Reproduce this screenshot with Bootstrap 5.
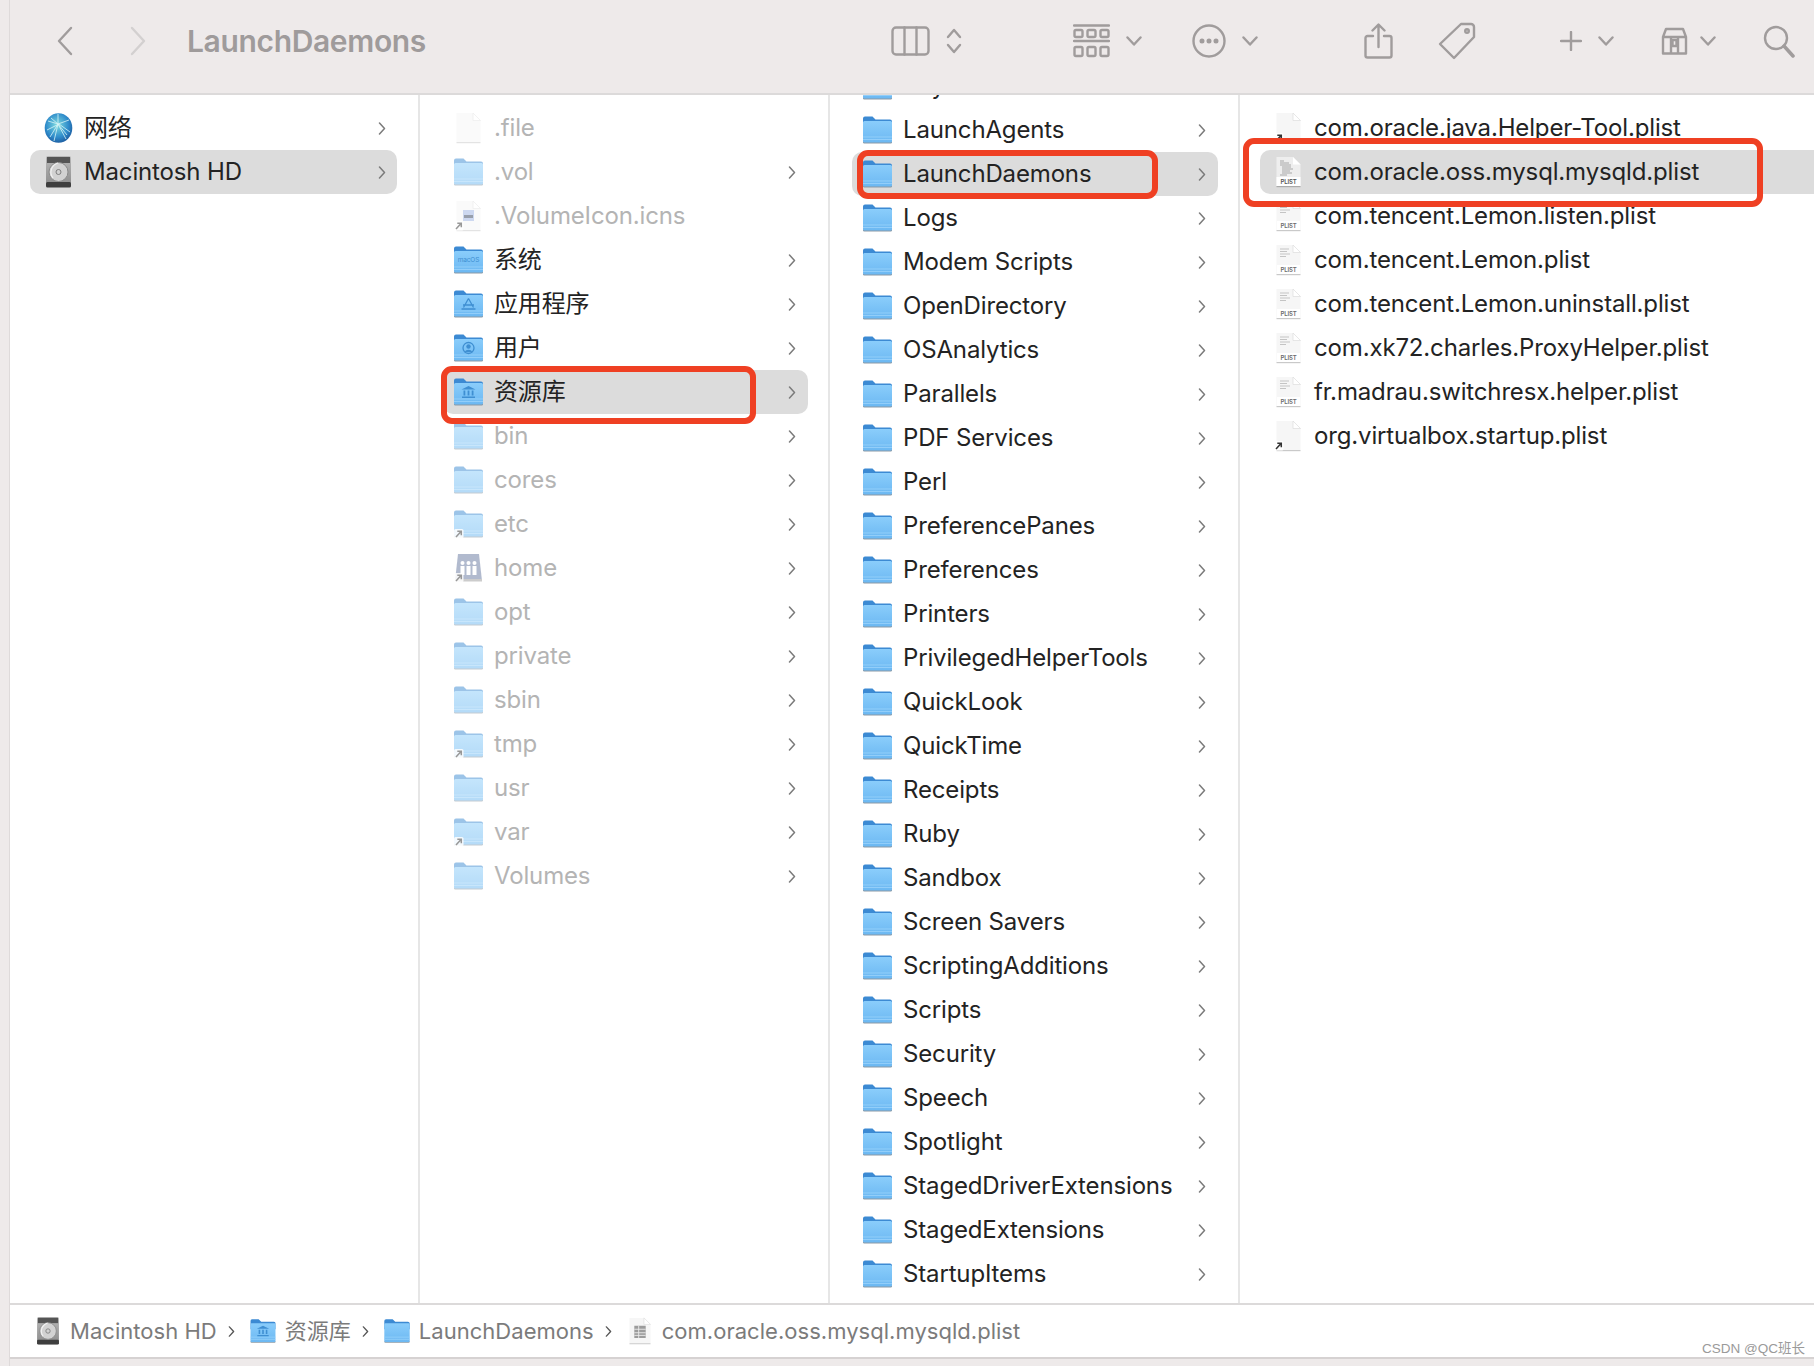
<!DOCTYPE html>
<html lang="zh"><head><meta charset="utf-8"><title>LaunchDaemons</title>
<link href="https://cdn.jsdelivr.net/npm/bootstrap@5.3.0/dist/css/bootstrap.min.css" rel="stylesheet">
<style>
html,body{height:100%;overflow:hidden}
body{background:#eeeaea;font-family:Inter,"Noto Sans CJK SC",sans-serif;color:#232323}
.fd-win{height:1366px;width:1814px;padding-left:9px;position:relative;overflow:hidden}
.fd-inner{height:100%;border-left:1px solid #dedada}
.fd-tool{height:95px;padding-bottom:11px;background:#eeeaea;border-bottom:2px solid #dcdada;padding-right:19px;flex:none}
.fd-title{font-size:30px;font-weight:600;color:#9f9b9b;margin-left:41px;letter-spacing:-.35px;line-height:1}
.fd-back{margin-left:46px}
.fd-fwd{margin-left:56px}
.fd-t{stroke:#a09c9c;fill:none;stroke-width:2.4;stroke-linecap:round;stroke-linejoin:round;display:block}
.g111{margin-left:111px}.g50{margin-left:50px}.g106{margin-left:106px}.g45{margin-left:45px}.g84{margin-left:84px}.g47{margin-left:47px}.g12{margin-left:12px}
.fd-cols{flex:1 1 0;min-height:0;background:#fff}
.fd-col{width:410px;flex:none;overflow:hidden;border-right:2px solid #e6e6e6;padding-top:11px}
.fd-col.side{width:410px;padding-right:21px;padding-left:20px}
.fd-col.c2{padding-left:23px;padding-right:20px}
.fd-col.c3{width:410px;padding-left:22px;padding-right:20px;padding-top:0}
.fd-scrolled{margin-top:-31px}
.fd-col.c4{flex:1 1 0;border-right:0;padding-left:20px}
.fd-row{height:44px;padding-left:11px;padding-right:12px;font-size:24px;letter-spacing:-.15px;white-space:nowrap;border-radius:10px}
.side .fd-row{padding-left:14px;padding-right:11px}
.c4 .fd-row{padding-left:14px;border-radius:10px 0 0 10px}
.fd-sel{background:#dcdcdc}
.fd-ic{width:29px;height:32px;flex:none;margin-right:11px;display:block}
.fd-name{flex:1 1 auto;min-width:0}
.fd-chev{width:8px;height:13px;flex:none;stroke:#7b7b7b;stroke-width:1.5;fill:none;stroke-linecap:round;stroke-linejoin:round}
.fd-dim .fd-name{color:#b4b4b4}
.fd-dim .fd-ic{opacity:.5}
.fd-status{height:56px;background:#fff;border-top:2px solid #dcdada;border-bottom:2px solid #d6d2d2;padding-left:25px;font-size:22px;color:#7b7b7b;letter-spacing:.03px;flex:none;white-space:nowrap}
.fd-status svg.s-ic{width:26px;height:28px;flex:none;margin-right:9px;display:block}
.fd-sep{width:7px;height:11px;flex:none;margin:0 15px 0 11px;stroke:#555;stroke-width:1.6;fill:none;stroke-linecap:round;stroke-linejoin:round}
.fd-end{flex:none;height:7px}
.fd-red{position:absolute;border:6px solid #ef4023;border-radius:11px;pointer-events:none}
.r1{left:441px;top:366px;width:315px;height:58px}
.r2{left:857px;top:150px;width:301px;height:49px}
.r3{left:1243px;top:138px;width:520px;height:69px}
.fd-mark{position:absolute;left:1702px;top:1341px;font-size:13.5px;color:#9a9a9a;font-family:"Liberation Sans","Noto Sans CJK SC",sans-serif;line-height:16px}
</style></head>
<body>
<svg width="0" height="0" class="position-absolute" aria-hidden="true">
<defs>
<linearGradient id="fg" x1="0" y1="0" x2="0" y2="1"><stop offset="0" stop-color="#8acdfb"/><stop offset="1" stop-color="#6cb8f2"/></linearGradient>
<radialGradient id="gb" cx=".45" cy=".4" r=".75"><stop offset="0" stop-color="#7fdde0"/><stop offset=".55" stop-color="#2f8ccb"/><stop offset="1" stop-color="#123f86"/></radialGradient>
<linearGradient id="hdg" x1="0" y1="0" x2="0" y2="1"><stop offset="0" stop-color="#b9b9b9"/><stop offset="1" stop-color="#8a8a8a"/></linearGradient>
<symbol id="folder" viewBox="0 0 29 32">
<path d="M0 4.500a2 2 0 0 1 2-2h7.500l3 3H27a2 2 0 0 1 2 2V14H0z" fill="#3c8ad3"/>
<rect x="0" y="27" width="29" height="2.500" rx="1.200" fill="#8b9aa6"/>
<path d="M0 8.500a1.500 1.500 0 0 1 1.500-1.500H27.500A1.500 1.500 0 0 1 29 8.500V27a1.500 1.500 0 0 1-1.500 1.500H1.500A1.500 1.500 0 0 1 0 27z" fill="url(#fg)"/>
<path d="M0 23h29M0 25.500h29" stroke="#9bd3fb" stroke-width=".8"/>
</symbol>
<symbol id="alias" viewBox="0 0 29 32">
<rect x="0" y="21" width="9.500" height="9.500" rx="1.500" fill="#fff" fill-opacity=".85"/>
<path d="M2 29l5-5.500M3.300 23.300h4v4" stroke="#333" stroke-width="1.500" fill="none"/>
</symbol>
<symbol id="f-mac" viewBox="0 0 29 32"><use href="#folder"/><text x="14.500" y="17.500" font-size="6.500" text-anchor="middle" fill="#3f8fd2" font-family="Inter,sans-serif">macOS</text></symbol>
<symbol id="f-app" viewBox="0 0 29 32"><use href="#folder"/><path d="M14.500 10.500l-5 9M14.500 10.500l5 9M9 17h11M7.500 21h14" stroke="#3f8fd2" stroke-width="1.300" fill="none"/></symbol>
<symbol id="f-usr" viewBox="0 0 29 32"><use href="#folder"/><circle cx="14.500" cy="16" r="5.500" fill="none" stroke="#3f8fd2" stroke-width="1.300"/><circle cx="14.500" cy="14.500" r="2.200" fill="#3f8fd2"/><path d="M10.800 20c1-3 6.400-3 7.400 0z" fill="#3f8fd2"/></symbol>
<symbol id="f-lib" viewBox="0 0 29 32"><use href="#folder"/><path d="M14.500 10l7 3.500h-14zM8 20.500h13v1.500H8zM9.500 14.500h1.800v5H9.500zM13.600 14.500h1.800v5h-1.800zM17.700 14.500h1.800v5h-1.800z" fill="#3f8fd2"/></symbol>
<symbol id="doc" viewBox="0 0 29 32">
<path d="M2.500 1H19l7.500 7.500V30H2.500z" fill="#f6f6f6"/>
<path d="M19 1v7.500h7.500z" fill="#fff" stroke="#dcdcdc" stroke-width=".7"/>
<path d="M2.500 30h24v1.200h-24z" fill="#c9c9c9"/>
</symbol>
<symbol id="plist" viewBox="0 0 29 32"><use href="#doc"/><path d="M6 5h9M6 7.500h7M6 10h10M6 12.500h6" stroke="#c4c4c4" stroke-width="1"/><rect x="3" y="21" width="23" height="9" fill="#fff"/><text x="14.500" y="27.500" font-size="6" font-weight="600" text-anchor="middle" fill="#6c6c6c" font-family="Inter,sans-serif">PLIST</text></symbol>
<symbol id="plist-b" viewBox="0 0 29 32"><path d="M2.500 1H19l7.500 7.500V30H2.500z" fill="#eee"/><path d="M19 1v7.500h7.500z" fill="#fff"/><path d="M6 5h4M6 7h9M6 9h11M8 11h9M8 13h11M8 15h8M8 17h10M6 19h7" stroke="#a8a8a8" stroke-width="1"/><rect x="2.500" y="21" width="24" height="9" fill="#fff"/><path d="M2.500 30h24v1.200h-24z" fill="#aaa"/><text x="14.500" y="27.500" font-size="6" font-weight="600" text-anchor="middle" fill="#555" font-family="Inter,sans-serif">PLIST</text></symbol>
<symbol id="doc-a" viewBox="0 0 29 32"><use href="#doc"/><use href="#alias"/></symbol>
<symbol id="doc-t" viewBox="0 0 29 32"><use href="#doc"/><rect x="8" y="10" width="13" height="14" fill="#9c9c9c"/><path d="M8 14h13M8 18h13M8 21h13M13 10v14" stroke="#eee"/></symbol>
<symbol id="f-a" viewBox="0 0 29 32"><use href="#folder"/><use href="#alias"/></symbol>
<symbol id="icns" viewBox="0 0 29 32"><use href="#doc"/><rect x="9" y="10" width="11" height="11" fill="#9cb3e2"/><rect x="10" y="15" width="9" height="3" fill="#33415c"/><use href="#alias"/></symbol>
<symbol id="home" viewBox="0 0 29 32"><path d="M4 2h21l3 27H1z" fill="#66789f"/><path d="M1 27h27v2.500H1z" fill="#9a9a9a"/><g fill="#fff"><circle cx="8.500" cy="11" r="2"/><circle cx="14.500" cy="11" r="2"/><circle cx="20.500" cy="11" r="2"/><path d="M6.500 14h4v9h-4zM12.500 14h4v9h-4zM18.500 14h4v9h-4z"/></g><use href="#alias"/></symbol>
<symbol id="globe" viewBox="0 0 29 32"><ellipse cx="14.500" cy="16" rx="13.800" ry="14.800" fill="url(#gb)"/><g stroke="#d8f4f6" stroke-width=".8" fill="none"><path d="M4 9l10 3 11-4M6 25l8-13 8 15M3 18l12-6 11 8M14 2v10l-4 17M7 6l7 6 9 11"/></g></symbol>
<symbol id="hd" viewBox="0 0 29 32"><rect x="2" y="0" width="25" height="31" rx="2" fill="url(#hdg)"/><rect x="3" y="1" width="23" height="6" fill="#555"/><rect x="2" y="26" width="25" height="5.500" rx="1.500" fill="#3e3e3e"/><circle cx="14.500" cy="16" r="9.500" fill="#d2d2d2" stroke="#8a8a8a"/><circle cx="14.500" cy="16" r="2.500" fill="none" stroke="#7f7f7f"/><path d="M14 7c-7 2-9 10-5 15" stroke="#f2f2f2" stroke-width="1.200" fill="none"/></symbol>
<symbol id="chev" viewBox="0 0 8 13"><path d="M1.500 1l5 5.500-5 5.500"/></symbol>
<symbol id="dn" viewBox="0 0 16 10"><path d="M1.500 1.500L8 8.500l6.500-7"/></symbol>
</defs></svg>

<div class="fd-win">
<div class="fd-inner d-flex flex-column">
  <header class="fd-tool d-flex align-items-center">
    <svg class="fd-t fd-back" width="18" height="30" viewBox="0 0 18 30"><path d="M15 2L3 15l12 13"/></svg>
    <svg class="fd-t fd-fwd" width="16" height="30" viewBox="0 0 16 30" style="stroke:#d3d0d0"><path d="M2 2l12 13L2 28"/></svg>
    <div class="fd-title">LaunchDaemons</div>
    <div class="ms-auto d-flex align-items-center">
      <div class="d-flex align-items-center gap-3">
        <svg class="fd-t" width="39" height="30" viewBox="0 0 39 30"><rect x="1.500" y="1.500" width="36" height="27" rx="3.500"/><path d="M13.500 1.500v27M25.500 1.500v27"/></svg>
        <svg class="fd-t" width="16" height="28" viewBox="0 0 16 28"><path d="M2 10l6-7 6 7M2 18l6 7 6-7"/></svg>
      </div>
      <div class="g111 d-flex align-items-center gap-3">
        <svg class="fd-t" width="37" height="34" viewBox="0 0 37 34"><path d="M1 1.500h35M1 17h35"/><rect x="1.500" y="6" width="8" height="7" rx="1.500"/><rect x="14.500" y="6" width="8" height="7" rx="1.500"/><rect x="27.500" y="6" width="8" height="7" rx="1.500"/><rect x="1.500" y="23" width="8" height="9" rx="1.500"/><rect x="14.500" y="23" width="8" height="9" rx="1.500"/><rect x="27.500" y="23" width="8" height="9" rx="1.500"/></svg>
        <svg class="fd-t" width="16" height="10" viewBox="0 0 16 10"><use href="#dn"/></svg>
      </div>
      <div class="g50 d-flex align-items-center gap-3">
        <svg class="fd-t" width="34" height="34" viewBox="0 0 34 34"><circle cx="17" cy="17" r="15.500"/><circle cx="10" cy="17" r="1.300" fill="#a09c9c"/><circle cx="17" cy="17" r="1.300" fill="#a09c9c"/><circle cx="24" cy="17" r="1.300" fill="#a09c9c"/></svg>
        <svg class="fd-t" width="16" height="10" viewBox="0 0 16 10"><use href="#dn"/></svg>
      </div>
      <svg class="fd-t g106" width="29" height="36" viewBox="0 0 29 36"><path d="M9 13H3.500a2 2 0 0 0-2 2v17.500a2 2 0 0 0 2 2h22a2 2 0 0 0 2-2V15a2 2 0 0 0-2-2H20M14.500 24V2M8.500 7.500l6-6 6 6"/></svg>
      <svg class="fd-t g45" width="38" height="38" viewBox="0 0 38 38"><path d="M23 2h10a3 3 0 0 1 3 3v10L16 36 2 22z"/><circle cx="29" cy="9" r="1.800"/></svg>
      <div class="g84 d-flex align-items-center gap-3">
        <svg class="fd-t" width="22" height="20" viewBox="0 0 22 20"><path d="M11 1v18M1 10h20"/></svg>
        <svg class="fd-t" width="16" height="10" viewBox="0 0 16 10"><use href="#dn"/></svg>
      </div>
      <div class="g47 d-flex align-items-center gap-2">
        <svg class="fd-t me-1" width="27" height="28" viewBox="0 0 27 28"><path d="M5 2h17l3 8v16.500H2V10zM2 10h23M10 10v16M17 10v16"/><rect x="11.500" y="13" width="4" height="6"/></svg>
        <svg class="fd-t" width="16" height="10" viewBox="0 0 16 10"><use href="#dn"/></svg>
      </div>
      <svg class="fd-t g47" width="32" height="33" viewBox="0 0 32 33"><circle cx="13" cy="13" r="11"/><path d="M21 21l9 10" stroke-width="3.500"/></svg>
    </div>
  </header>

  <main class="fd-cols d-flex">
    <section class="fd-col side">
      <div class="fd-row d-flex align-items-center"><svg class="fd-ic"><use href="#globe"/></svg><span class="fd-name">网络</span><svg class="fd-chev"><use href="#chev"/></svg></div>
      <div class="fd-row d-flex align-items-center fd-sel"><svg class="fd-ic"><use href="#hd"/></svg><span class="fd-name">Macintosh HD</span><svg class="fd-chev"><use href="#chev"/></svg></div>
    </section>
    <section class="fd-col c2">
      <div class="fd-row d-flex align-items-center fd-dim"><svg class="fd-ic"><use href="#doc"/></svg><span class="fd-name">.file</span></div>
      <div class="fd-row d-flex align-items-center fd-dim"><svg class="fd-ic"><use href="#folder"/></svg><span class="fd-name">.vol</span><svg class="fd-chev"><use href="#chev"/></svg></div>
      <div class="fd-row d-flex align-items-center fd-dim"><svg class="fd-ic"><use href="#icns"/></svg><span class="fd-name">.VolumeIcon.icns</span></div>
      <div class="fd-row d-flex align-items-center"><svg class="fd-ic"><use href="#f-mac"/></svg><span class="fd-name">系统</span><svg class="fd-chev"><use href="#chev"/></svg></div>
      <div class="fd-row d-flex align-items-center"><svg class="fd-ic"><use href="#f-app"/></svg><span class="fd-name">应用程序</span><svg class="fd-chev"><use href="#chev"/></svg></div>
      <div class="fd-row d-flex align-items-center"><svg class="fd-ic"><use href="#f-usr"/></svg><span class="fd-name">用户</span><svg class="fd-chev"><use href="#chev"/></svg></div>
      <div class="fd-row d-flex align-items-center fd-sel"><svg class="fd-ic"><use href="#f-lib"/></svg><span class="fd-name">资源库</span><svg class="fd-chev"><use href="#chev"/></svg></div>
      <div class="fd-row d-flex align-items-center fd-dim"><svg class="fd-ic"><use href="#folder"/></svg><span class="fd-name">bin</span><svg class="fd-chev"><use href="#chev"/></svg></div>
      <div class="fd-row d-flex align-items-center fd-dim"><svg class="fd-ic"><use href="#folder"/></svg><span class="fd-name">cores</span><svg class="fd-chev"><use href="#chev"/></svg></div>
      <div class="fd-row d-flex align-items-center fd-dim"><svg class="fd-ic"><use href="#f-a"/></svg><span class="fd-name">etc</span><svg class="fd-chev"><use href="#chev"/></svg></div>
      <div class="fd-row d-flex align-items-center fd-dim"><svg class="fd-ic"><use href="#home"/></svg><span class="fd-name">home</span><svg class="fd-chev"><use href="#chev"/></svg></div>
      <div class="fd-row d-flex align-items-center fd-dim"><svg class="fd-ic"><use href="#folder"/></svg><span class="fd-name">opt</span><svg class="fd-chev"><use href="#chev"/></svg></div>
      <div class="fd-row d-flex align-items-center fd-dim"><svg class="fd-ic"><use href="#folder"/></svg><span class="fd-name">private</span><svg class="fd-chev"><use href="#chev"/></svg></div>
      <div class="fd-row d-flex align-items-center fd-dim"><svg class="fd-ic"><use href="#folder"/></svg><span class="fd-name">sbin</span><svg class="fd-chev"><use href="#chev"/></svg></div>
      <div class="fd-row d-flex align-items-center fd-dim"><svg class="fd-ic"><use href="#f-a"/></svg><span class="fd-name">tmp</span><svg class="fd-chev"><use href="#chev"/></svg></div>
      <div class="fd-row d-flex align-items-center fd-dim"><svg class="fd-ic"><use href="#folder"/></svg><span class="fd-name">usr</span><svg class="fd-chev"><use href="#chev"/></svg></div>
      <div class="fd-row d-flex align-items-center fd-dim"><svg class="fd-ic"><use href="#f-a"/></svg><span class="fd-name">var</span><svg class="fd-chev"><use href="#chev"/></svg></div>
      <div class="fd-row d-flex align-items-center fd-dim"><svg class="fd-ic"><use href="#folder"/></svg><span class="fd-name">Volumes</span><svg class="fd-chev"><use href="#chev"/></svg></div>
    </section>
    <section class="fd-col c3"><div class="fd-scrolled">
      <div class="fd-row d-flex align-items-center"><svg class="fd-ic"><use href="#folder"/></svg><span class="fd-name">Keychains</span><svg class="fd-chev"><use href="#chev"/></svg></div>
      <div class="fd-row d-flex align-items-center"><svg class="fd-ic"><use href="#folder"/></svg><span class="fd-name">LaunchAgents</span><svg class="fd-chev"><use href="#chev"/></svg></div>
      <div class="fd-row d-flex align-items-center fd-sel"><svg class="fd-ic"><use href="#folder"/></svg><span class="fd-name">LaunchDaemons</span><svg class="fd-chev"><use href="#chev"/></svg></div>
      <div class="fd-row d-flex align-items-center"><svg class="fd-ic"><use href="#folder"/></svg><span class="fd-name">Logs</span><svg class="fd-chev"><use href="#chev"/></svg></div>
      <div class="fd-row d-flex align-items-center"><svg class="fd-ic"><use href="#folder"/></svg><span class="fd-name">Modem Scripts</span><svg class="fd-chev"><use href="#chev"/></svg></div>
      <div class="fd-row d-flex align-items-center"><svg class="fd-ic"><use href="#folder"/></svg><span class="fd-name">OpenDirectory</span><svg class="fd-chev"><use href="#chev"/></svg></div>
      <div class="fd-row d-flex align-items-center"><svg class="fd-ic"><use href="#folder"/></svg><span class="fd-name">OSAnalytics</span><svg class="fd-chev"><use href="#chev"/></svg></div>
      <div class="fd-row d-flex align-items-center"><svg class="fd-ic"><use href="#folder"/></svg><span class="fd-name">Parallels</span><svg class="fd-chev"><use href="#chev"/></svg></div>
      <div class="fd-row d-flex align-items-center"><svg class="fd-ic"><use href="#folder"/></svg><span class="fd-name">PDF Services</span><svg class="fd-chev"><use href="#chev"/></svg></div>
      <div class="fd-row d-flex align-items-center"><svg class="fd-ic"><use href="#folder"/></svg><span class="fd-name">Perl</span><svg class="fd-chev"><use href="#chev"/></svg></div>
      <div class="fd-row d-flex align-items-center"><svg class="fd-ic"><use href="#folder"/></svg><span class="fd-name">PreferencePanes</span><svg class="fd-chev"><use href="#chev"/></svg></div>
      <div class="fd-row d-flex align-items-center"><svg class="fd-ic"><use href="#folder"/></svg><span class="fd-name">Preferences</span><svg class="fd-chev"><use href="#chev"/></svg></div>
      <div class="fd-row d-flex align-items-center"><svg class="fd-ic"><use href="#folder"/></svg><span class="fd-name">Printers</span><svg class="fd-chev"><use href="#chev"/></svg></div>
      <div class="fd-row d-flex align-items-center"><svg class="fd-ic"><use href="#folder"/></svg><span class="fd-name">PrivilegedHelperTools</span><svg class="fd-chev"><use href="#chev"/></svg></div>
      <div class="fd-row d-flex align-items-center"><svg class="fd-ic"><use href="#folder"/></svg><span class="fd-name">QuickLook</span><svg class="fd-chev"><use href="#chev"/></svg></div>
      <div class="fd-row d-flex align-items-center"><svg class="fd-ic"><use href="#folder"/></svg><span class="fd-name">QuickTime</span><svg class="fd-chev"><use href="#chev"/></svg></div>
      <div class="fd-row d-flex align-items-center"><svg class="fd-ic"><use href="#folder"/></svg><span class="fd-name">Receipts</span><svg class="fd-chev"><use href="#chev"/></svg></div>
      <div class="fd-row d-flex align-items-center"><svg class="fd-ic"><use href="#folder"/></svg><span class="fd-name">Ruby</span><svg class="fd-chev"><use href="#chev"/></svg></div>
      <div class="fd-row d-flex align-items-center"><svg class="fd-ic"><use href="#folder"/></svg><span class="fd-name">Sandbox</span><svg class="fd-chev"><use href="#chev"/></svg></div>
      <div class="fd-row d-flex align-items-center"><svg class="fd-ic"><use href="#folder"/></svg><span class="fd-name">Screen Savers</span><svg class="fd-chev"><use href="#chev"/></svg></div>
      <div class="fd-row d-flex align-items-center"><svg class="fd-ic"><use href="#folder"/></svg><span class="fd-name">ScriptingAdditions</span><svg class="fd-chev"><use href="#chev"/></svg></div>
      <div class="fd-row d-flex align-items-center"><svg class="fd-ic"><use href="#folder"/></svg><span class="fd-name">Scripts</span><svg class="fd-chev"><use href="#chev"/></svg></div>
      <div class="fd-row d-flex align-items-center"><svg class="fd-ic"><use href="#folder"/></svg><span class="fd-name">Security</span><svg class="fd-chev"><use href="#chev"/></svg></div>
      <div class="fd-row d-flex align-items-center"><svg class="fd-ic"><use href="#folder"/></svg><span class="fd-name">Speech</span><svg class="fd-chev"><use href="#chev"/></svg></div>
      <div class="fd-row d-flex align-items-center"><svg class="fd-ic"><use href="#folder"/></svg><span class="fd-name">Spotlight</span><svg class="fd-chev"><use href="#chev"/></svg></div>
      <div class="fd-row d-flex align-items-center"><svg class="fd-ic"><use href="#folder"/></svg><span class="fd-name">StagedDriverExtensions</span><svg class="fd-chev"><use href="#chev"/></svg></div>
      <div class="fd-row d-flex align-items-center"><svg class="fd-ic"><use href="#folder"/></svg><span class="fd-name">StagedExtensions</span><svg class="fd-chev"><use href="#chev"/></svg></div>
      <div class="fd-row d-flex align-items-center"><svg class="fd-ic"><use href="#folder"/></svg><span class="fd-name">StartupItems</span><svg class="fd-chev"><use href="#chev"/></svg></div>
    </div></section>
    <section class="fd-col c4">
      <div class="fd-row d-flex align-items-center"><svg class="fd-ic"><use href="#doc-a"/></svg><span class="fd-name">com.oracle.java.Helper-Tool.plist</span></div>
      <div class="fd-row d-flex align-items-center fd-sel"><svg class="fd-ic"><use href="#plist-b"/></svg><span class="fd-name">com.oracle.oss.mysql.mysqld.plist</span></div>
      <div class="fd-row d-flex align-items-center"><svg class="fd-ic"><use href="#plist"/></svg><span class="fd-name">com.tencent.Lemon.listen.plist</span></div>
      <div class="fd-row d-flex align-items-center"><svg class="fd-ic"><use href="#plist"/></svg><span class="fd-name">com.tencent.Lemon.plist</span></div>
      <div class="fd-row d-flex align-items-center"><svg class="fd-ic"><use href="#plist"/></svg><span class="fd-name">com.tencent.Lemon.uninstall.plist</span></div>
      <div class="fd-row d-flex align-items-center"><svg class="fd-ic"><use href="#plist"/></svg><span class="fd-name">com.xk72.charles.ProxyHelper.plist</span></div>
      <div class="fd-row d-flex align-items-center"><svg class="fd-ic"><use href="#plist"/></svg><span class="fd-name">fr.madrau.switchresx.helper.plist</span></div>
      <div class="fd-row d-flex align-items-center"><svg class="fd-ic"><use href="#doc-a"/></svg><span class="fd-name">org.virtualbox.startup.plist</span></div>
    </section>
  </main>

  <footer class="fd-status d-flex align-items-center">
    <svg class="s-ic"><use href="#hd"/></svg><span>Macintosh HD</span><svg class="fd-sep" viewBox="0 0 8 13"><use href="#chev"/></svg>
    <svg class="s-ic"><use href="#f-lib"/></svg><span>资源库</span><svg class="fd-sep" viewBox="0 0 8 13"><use href="#chev"/></svg>
    <svg class="s-ic"><use href="#folder"/></svg><span>LaunchDaemons</span><svg class="fd-sep" viewBox="0 0 8 13"><use href="#chev"/></svg>
    <svg class="s-ic"><use href="#doc-t"/></svg><span>com.oracle.oss.mysql.mysqld.plist</span>
  </footer>
  <div class="fd-end"></div>
</div>
<div class="fd-red r1"></div>
<div class="fd-red r2"></div>
<div class="fd-red r3"></div>
<div class="fd-mark">CSDN @QC班长</div>
</div>
<script src="https://cdn.jsdelivr.net/npm/bootstrap@5.3.0/dist/js/bootstrap.bundle.min.js"></script>
</body></html>
